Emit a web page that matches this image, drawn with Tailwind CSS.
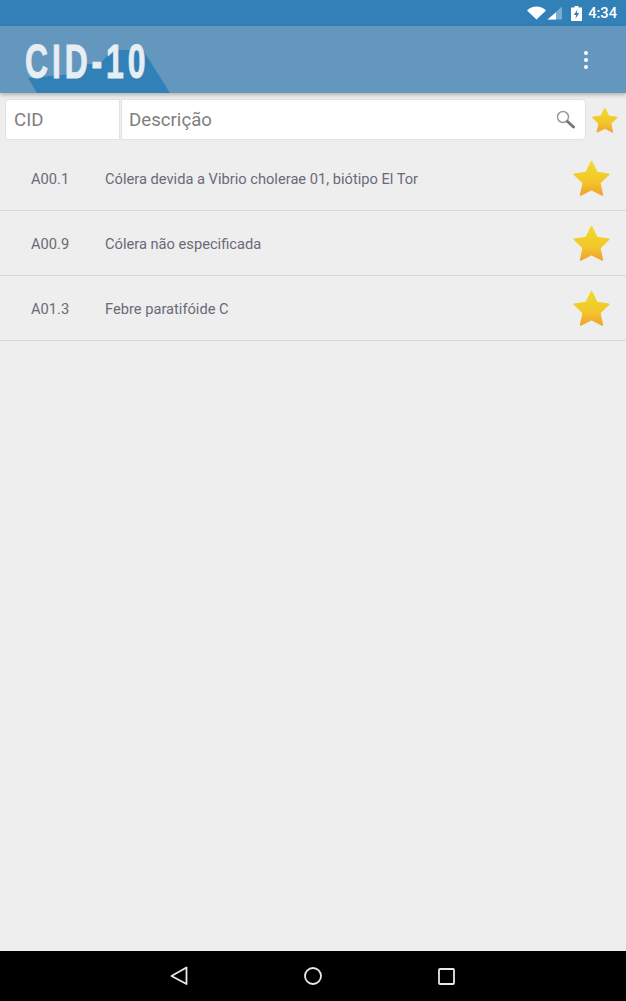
<!DOCTYPE html>
<html lang="en">
<head>
    <meta charset="UTF-8">
    <meta name="viewport" content="width=device-width, initial-scale=1.0">
    <title>CID-10</title>
    <script src="https://cdn.jsdelivr.net/npm/@tailwindcss/browser@4"></script>
</head>
<body class="bg-[#eeeeee] font-['Roboto',sans-serif]">
    <svg width="0" height="0" class="absolute">
        <defs>
            <linearGradient id="starFill" gradientUnits="userSpaceOnUse" x1="0" y1="0" x2="0" y2="36">
                <stop offset="0" stop-color="#efdc2c"></stop>
                <stop offset="0.6" stop-color="#f3c62a"></stop>
                <stop offset="1" stop-color="#f09f30"></stop>
            </linearGradient>
            <symbol id="star" viewBox="0 0 38 36">
                <path fill="url(#starFill)" stroke="url(#starFill)" stroke-width="1.500" stroke-linejoin="round" d="M19.500 1.500 25 12.500 36.800 14.200 27.800 23 30.400 35 19.500 29.500 8.600 35 11.200 23 2.200 14.200 14 12.500Z"></path>
            </symbol>
        </defs>
    </svg>

    <div class="flex flex-col h-[1001px] w-[626px] overflow-hidden">
        <!-- status bar -->
        <div class="h-[26px] bg-[#3280b8] flex items-center justify-end pr-[9px] text-white shrink-0">
            <svg width="36" height="14" viewBox="0 0 36 14">
                <path fill="#fff" d="M0 4.500C2.500 2 6 .5 9.500.5S16.500 2 19 4.500L9.500 13.500Z"></path>
                <path fill="#fff" fill-opacity=".35" d="M35 .5V13.500H20.500Z"></path>
                <path fill="#fff" d="M29 6.500V13.500H20.500Z"></path>
            </svg>
            <svg width="11" height="15" viewBox="0 0 11 15" class="ml-[8px]">
                <path fill="#fff" fill-rule="evenodd" d="M3.500 0h4v1.500H11V15H0V1.500h3.500ZM6.500 3.500 2.800 9h2.300l-.6 3.800L8.300 7H5.900Z"></path>
            </svg>
            <span class="text-[14.67px] font-medium leading-none ml-[6px]">4:34</span>
        </div>

        <!-- toolbar -->
        <div class="relative h-[67px] bg-[#6497bd] shrink-0 shadow-[0_2px_4px_rgba(0,0,0,0.25)] overflow-hidden flex items-center justify-between pl-[25px] pr-[38px]">
            <svg class="absolute left-0 top-0" width="180" height="67" viewBox="0 0 180 67">
                <path fill="#3280b8" d="M28 52 37 67H170L143 24H112L100 38H84V47Z"></path>
            </svg>
            <span class="relative pt-[4px] font-['Liberation_Sans',sans-serif] font-bold text-[49px] leading-none tracking-[6px] text-[#e6edf3] [-webkit-text-stroke:1px_#e6edf3] origin-left scale-x-[0.65] whitespace-nowrap">CID-10</span>
            <div class="relative flex flex-col gap-[3px]">
                <span class="size-[4px] rounded-full bg-white"></span>
                <span class="size-[4px] rounded-full bg-white"></span>
                <span class="size-[4px] rounded-full bg-white"></span>
            </div>
        </div>

        <!-- search -->
        <div class="flex items-center pl-[5px] pt-[6px] h-[47px] shrink-0">
            <div class="w-[115px] h-[41px] bg-white border border-[#e2e2e2] rounded-l-[4px] flex items-center pt-[1px] pl-[8px] text-[18.67px] text-[#808080]">CID</div>
            <div class="w-[465px] h-[41px] ml-[1px] bg-white border border-[#e2e2e2] rounded-r-[4px] flex items-center justify-between pl-[7px] pr-[10px] text-[18.67px] text-[#808080]">
                <span class="pt-[1px]">Descrição</span>
                <svg width="19" height="19" viewBox="0 0 19 19" fill="none">
                    <circle cx="7" cy="7" r="5.500" stroke="#9a9a9a" stroke-width="1.500"></circle>
                    <path d="M11.500 11.500 17.500 17" stroke="#777" stroke-width="3" stroke-linecap="round"></path>
                </svg>
            </div>
            <svg width="27" height="26" class="ml-[5px]"><use href="#star"></use></svg>
        </div>

        <!-- results -->
        <div class="flex-1 pt-[6px] text-[14.67px] text-[#6a6a76]">
            <div class="flex items-center h-[65px] border-b border-[#d8d8d8] pl-[31px] pr-[16px]">
                <span class="w-[74px] pt-[1px]">A00.1</span>
                <span class="flex-1 pt-[1px]">Cólera devida a Vibrio cholerae 01, biótipo El Tor</span>
                <svg width="38" height="36"><use href="#star"></use></svg>
            </div>
            <div class="flex items-center h-[65px] border-b border-[#d8d8d8] pl-[31px] pr-[16px]">
                <span class="w-[74px] pt-[1px]">A00.9</span>
                <span class="flex-1 pt-[1px]">Cólera não especificada</span>
                <svg width="38" height="36"><use href="#star"></use></svg>
            </div>
            <div class="flex items-center h-[65px] border-b border-[#d8d8d8] pl-[31px] pr-[16px]">
                <span class="w-[74px] pt-[1px]">A01.3</span>
                <span class="flex-1 pt-[1px]">Febre paratifóide C</span>
                <svg width="38" height="36"><use href="#star"></use></svg>
            </div>
        </div>

        <!-- nav bar -->
        <div class="h-[50px] bg-black shrink-0 flex items-center justify-center gap-[116px] pr-[1px]">
            <svg width="18" height="20" viewBox="0 0 18 20" fill="none">
                <path d="M16.500 1.500V18L1.500 10Z" stroke="#e8e8e8" stroke-width="1.800" stroke-linejoin="round"></path>
            </svg>
            <svg width="18" height="18" viewBox="0 0 18 18" fill="none">
                <circle cx="9" cy="9" r="8" stroke="#e8e8e8" stroke-width="1.800"></circle>
            </svg>
            <svg width="17" height="17" viewBox="0 0 17 17" fill="none">
                <rect x="1" y="1" width="15" height="15" rx="1" stroke="#e8e8e8" stroke-width="1.800"></rect>
            </svg>
        </div>
    </div>
</body>
</html>
